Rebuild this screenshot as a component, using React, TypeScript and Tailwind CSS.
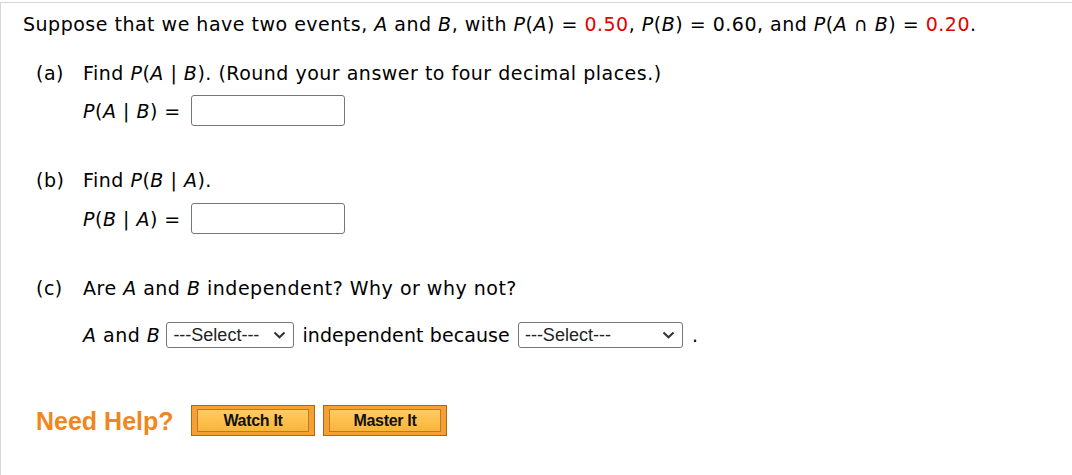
import React from "react";

const verdana = { fontFamily: '"DejaVu Sans", Verdana, sans-serif' };

const Var = ({ children }: { children: React.ReactNode }) => <i>{children}</i>;

const Red = ({ children }: { children: React.ReactNode }) => (
  <span className="text-[#e60000]">{children}</span>
);

const Chevron = () => (
  <svg
    width="13"
    height="8"
    viewBox="0 0 13 8"
    className="absolute right-[8px] top-1/2 -translate-y-1/2 pointer-events-none"
  >
    <path d="M1.5 1.5 L6.5 6.3 L11.5 1.5" fill="none" stroke="#333" strokeWidth="2" />
  </svg>
);

const FakeSelect = ({ width }: { width: string }) => (
  <span className={`relative inline-flex ${width}`}>
    <select
      className="appearance-none w-full h-[26px] border border-[#767676] rounded-[3px] bg-white pl-[6px] text-[18px] leading-[24px] text-[#222] tracking-normal"
      style={{ fontFamily: '"Liberation Sans", Arial, sans-serif' }}
      defaultValue=""
    >
      <option value="">---Select---</option>
    </select>
    <Chevron />
  </span>
);

const HelpButton = ({ label }: { label: string }) => (
  <div className="w-[124px] h-[31px] border border-[#a8661f] bg-[#f5a030] p-[3px_5px]">
    <div className="h-full border border-[#b97a2c] bg-gradient-to-b from-[#ffcb60] to-[#fbb43a] flex items-center justify-center">
      <span
        className="text-[16px] font-bold text-[#111] tracking-[-0.3px]"
        style={{ fontFamily: '"Liberation Sans", Arial, sans-serif' }}
      >
        {label}
      </span>
    </div>
  </div>
);

const Part = ({ tag, children }: { tag: string; children: React.ReactNode }) => (
  <div className="flex pl-[35px] h-[22px] items-center">
    <span className="w-[47px]">{tag}</span>
    <span>{children}</span>
  </div>
);

export default function App() {
  return (
    <div className="min-h-screen bg-white pt-[2px]">
      <div
        className="min-h-[473px] border-t border-l border-[#d6d6d6] text-[19px] leading-[22px] tracking-[0.5px] text-black"
        style={verdana}
      >
        <p className="pl-[22px] pt-[10px]">
          Suppose that we have two events, <Var>A</Var> and <Var>B</Var>, with{" "}
          <Var>P</Var>(<Var>A</Var>) = <Red>0.50</Red>, <Var>P</Var>(<Var>B</Var>) = 0.60,
          and <Var>P</Var>(<Var>A</Var> ∩ <Var>B</Var>) = <Red>0.20</Red>.
        </p>

        {/* (a) */}
        <div className="mt-[27px]">
          <Part tag="(a)">
            Find <Var>P</Var>(<Var>A</Var> | <Var>B</Var>). (Round your answer to four decimal places.)
          </Part>
          <div className="flex items-center pl-[82px] mt-[11px] h-[31px]">
            <span className="mr-[10px]">
              <Var>P</Var>(<Var>A</Var> | <Var>B</Var>) =
            </span>
            <input className="w-[154px] h-[31px] border border-[#767676] rounded-[3px] bg-white" />
          </div>
        </div>

        {/* (b) */}
        <div className="mt-[43px]">
          <Part tag="(b)">
            Find <Var>P</Var>(<Var>B</Var> | <Var>A</Var>).
          </Part>
          <div className="flex items-center pl-[82px] mt-[12px] h-[31px]">
            <span className="mr-[10px]">
              <Var>P</Var>(<Var>B</Var> | <Var>A</Var>) =
            </span>
            <input className="w-[154px] h-[31px] border border-[#767676] rounded-[3px] bg-white" />
          </div>
        </div>

        {/* (c) */}
        <div className="mt-[43px]">
          <Part tag="(c)">
            Are <Var>A</Var> and <Var>B</Var> independent? Why or why not?
          </Part>
          <div className="flex items-center pl-[82px] mt-[23px] h-[26px]">
            <span className="mr-[6px]">
              <Var>A</Var> and <Var>B</Var>
            </span>
            <FakeSelect width="w-[128px]" />
            <span className="mx-[8px] tracking-[0.1px]">independent because</span>
            <FakeSelect width="w-[165px]" />
            <span className="ml-[9px]">.</span>
          </div>
        </div>

        {/* help */}
        <div className="flex items-center mt-[57px] pl-[35px] h-[31px]">
          <span
            className="w-[155px] text-[25px] font-bold text-[#f0861d] tracking-normal"
            style={{ fontFamily: '"Liberation Sans", Arial, sans-serif' }}
          >
            Need Help?
          </span>
          <HelpButton label="Watch It" />
          <div className="w-[8px]" />
          <HelpButton label="Master It" />
        </div>
      </div>
    </div>
  );
}
